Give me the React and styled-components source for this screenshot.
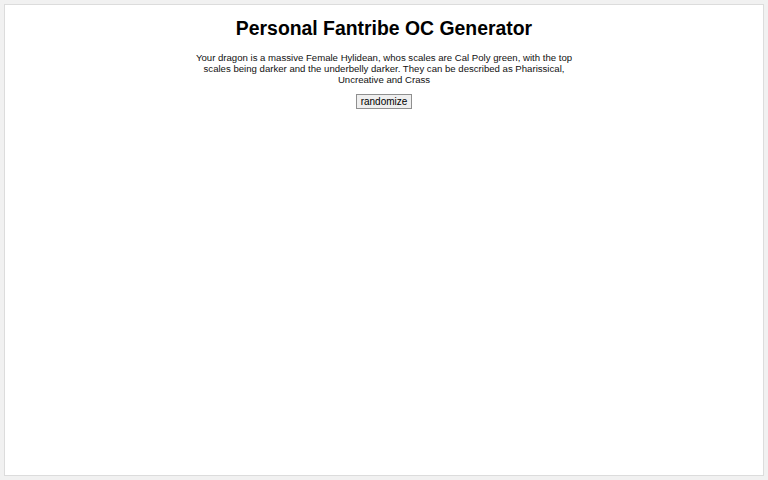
import React from "react";
import styled, { createGlobalStyle } from "styled-components";

const Global = createGlobalStyle`
  html, body { margin: 0; padding: 0; }
  body {
    background: #f1f1f1;
    font-family: "Liberation Sans", Arial, sans-serif;
    color: #000;
  }
`;

const Frame = styled.div`
  padding: 4px;
  box-sizing: border-box;
  height: 480px;
`;

const Card = styled.main`
  background: #fff;
  border: 1px solid #dcdcdc;
  height: 100%;
  box-sizing: border-box;
  display: flex;
  flex-direction: column;
  align-items: center;
  padding-top: 11px;
`;

const Title = styled.h1`
  margin: 0;
  font-size: 19.4px;
  font-weight: bold;
  line-height: 24px;
`;

const Description = styled.p`
  margin: 12px 0 0;
  width: 384px;
  text-align: center;
  font-size: 9.6px;
  line-height: 11px;
  color: #111;
`;

const Button = styled.button`
  margin-top: 9px;
  font-family: "Liberation Sans", Arial, sans-serif;
  font-size: 10px;
  line-height: 11px;
  padding: 1px 4px;
  background: #efefef;
  border: 1px solid #8f8f8f;
  border-radius: 0;
  color: #000;
`;

export default function App() {
  return (
    <>
      <Global />
      <Frame>
        <Card>
          <Title>Personal Fantribe OC Generator</Title>
          <Description>
            Your dragon is a massive Female Hylidean, whos scales are Cal Poly green, with the top
            scales being darker and the underbelly darker. They can be described as Pharissical,
            Uncreative and Crass
          </Description>
          <Button>randomize</Button>
        </Card>
      </Frame>
    </>
  );
}
